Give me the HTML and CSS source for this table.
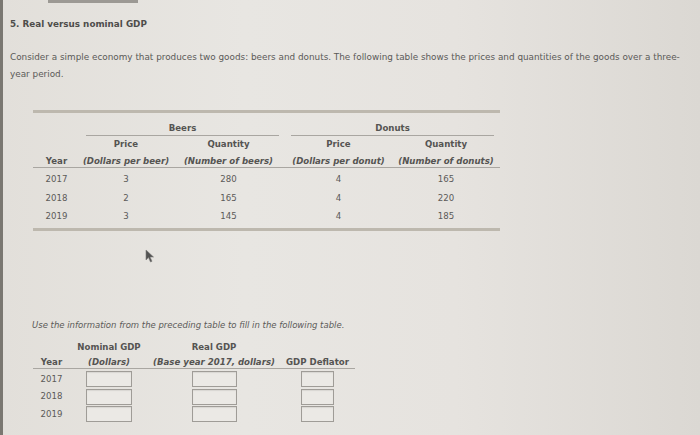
FILE: index.html
```html
<!DOCTYPE html>
<html>
<head>
<meta charset="utf-8">
<link rel="stylesheet" href="styles.css">
</head>
<body>
<div class="page">
  <div class="topbar"></div>
  <h1 class="title">5. Real versus nominal GDP</h1>
  <p class="intro">Consider a simple economy that produces two goods: beers and donuts. The following table shows the prices and quantities of the goods over a three-year period.</p>

  <table class="data">
    <colgroup>
      <col class="c-year"><col class="c-bp"><col class="c-bq"><col class="c-dp"><col class="c-dq">
    </colgroup>
    <thead>
      <tr class="r-group">
        <th></th>
        <th colspan="2"><div class="group">Beers</div></th>
        <th colspan="2"><div class="group">Donuts</div></th>
      </tr>
      <tr class="r-label">
        <th></th><th>Price</th><th>Quantity</th><th>Price</th><th>Quantity</th>
      </tr>
      <tr class="r-unit">
        <th>Year</th>
        <th><em>(Dollars per beer)</em></th>
        <th><em>(Number of beers)</em></th>
        <th><em>(Dollars per donut)</em></th>
        <th><em>(Number of donuts)</em></th>
      </tr>
    </thead>
    <tbody>
      <tr class="first"><td>2017</td><td>3</td><td>280</td><td>4</td><td>165</td></tr>
      <tr><td>2018</td><td>2</td><td>165</td><td>4</td><td>220</td></tr>
      <tr class="last"><td>2019</td><td>3</td><td>145</td><td>4</td><td>185</td></tr>
    </tbody>
  </table>

  <p class="instr">Use the information from the preceding table to fill in the following table.</p>

  <table class="answer">
    <colgroup>
      <col class="a-year"><col class="a-nom"><col class="a-real"><col class="a-def">
    </colgroup>
    <thead>
      <tr class="r-top">
        <th></th><th>Nominal GDP</th><th>Real GDP</th><th></th>
      </tr>
      <tr class="r-bot">
        <th>Year</th>
        <th><em>(Dollars)</em></th>
        <th><em>(Base year 2017, dollars)</em></th>
        <th>GDP Deflator</th>
      </tr>
    </thead>
    <tbody>
      <tr class="first"><td>2017</td><td><span class="box w1"></span></td><td><span class="box w2"></span></td><td><span class="box w3"></span></td></tr>
      <tr><td>2018</td><td><span class="box w1"></span></td><td><span class="box w2"></span></td><td><span class="box w3"></span></td></tr>
      <tr><td>2019</td><td><span class="box w1"></span></td><td><span class="box w2"></span></td><td><span class="box w3"></span></td></tr>
    </tbody>
  </table>

  <svg class="cursor" width="10" height="14" viewBox="0 0 10 14">
    <path d="M1 1 L1 11 L3.5 8.5 L5.5 13 L7 12.3 L5 8 L8.5 8 Z" fill="#3a3a3a" stroke="#6a6a6a" stroke-width="0.6"/>
  </svg>
</div>
</body>
</html>
```
FILE: styles.css
```css
html, body {
  margin: 0;
  padding: 0;
}
body {
  width: 700px;
  height: 435px;
  overflow: hidden;
  font-family: "DejaVu Sans", Verdana, sans-serif;
  color: #5b5a58;
  background: linear-gradient(90deg, #e2dfda 0%, #e8e6e2 35%, #e6e3df 65%, #dbd8d3 100%);
}
.page {
  position: relative;
  height: 435px;
  box-sizing: border-box;
  border-left: 3px solid #7a7771;
  padding: 0 0 0 7px;
}
.topbar {
  width: 90px;
  height: 3px;
  margin-left: 38px;
  background: #9c9994;
}
.title {
  margin: 15px 0 0 0;
  font-size: 8.8px;
  line-height: 12px;
  font-weight: bold;
  color: #4e4d4b;
}
.intro {
  margin: 19px 0 0 0;
  font-size: 8.85px;
  line-height: 17px;
  width: 682px;
}
table {
  border-collapse: collapse;
  table-layout: fixed;
  font-size: 8.6px;
}
th, td {
  padding: 0;
  text-align: center;
}
th {
  font-weight: bold;
  color: #555452;
}
em {
  font-style: italic;
}

/* data table */
.data {
  margin: 27px 0 0 23px;
  width: 467px;
  border-top: 3px solid #bdb8ae;
  border-bottom: 3px solid #bdb8ae;
}
.c-year { width: 47px; }
.c-bp { width: 92px; }
.c-bq { width: 113px; }
.c-dp { width: 107px; }
.c-dq { width: 108px; }
.r-group th {
  height: 23px;
  vertical-align: top;
}
.group {
  margin: 0 6px;
  padding-top: 8px;
  line-height: 14px;
  border-bottom: 1px solid #a9a6a1;
}
.r-label th {
  height: 17px;
  line-height: 17px;
}
.r-unit th {
  height: 12px;
  padding-top: 2px;
  line-height: 12px;
  border-bottom: 1px solid #a9a6a1;
}
.data td {
  height: 18.5px;
  line-height: 18.5px;
}
.data tr.first td {
  padding-top: 2px;
}
.data tr.last td {
  padding-bottom: 2px;
}

.instr {
  margin: 87px 0 0 22px;
  font-size: 8.5px;
  line-height: 14px;
  font-style: italic;
}

/* answer table */
.answer {
  margin: 7px 0 0 23px;
  width: 322px;
}
.a-year { width: 37px; }
.a-nom { width: 78px; }
.a-real { width: 132px; }
.a-def { width: 75px; }
.r-top th {
  height: 17px;
  line-height: 17px;
}
.r-bot th {
  height: 12px;
  line-height: 12px;
  border-bottom: 1px solid #a9a6a1;
}
.answer td {
  height: 17.5px;
  line-height: 17.5px;
}
.answer tr.first td {
  padding-top: 2px;
}
.box {
  display: inline-block;
  vertical-align: middle;
  height: 16px;
  box-sizing: border-box;
  border: 1px solid #9f9c97;
  background: #ebe9e5;
  box-shadow: inset 0 1px 1px rgba(0,0,0,0.08);
}
.w1 { width: 46px; }
.w2 { width: 45px; }
.w3 { width: 33px; }

.cursor {
  position: absolute;
  left: 142px;
  top: 249px;
  opacity: 0.85;
}
```
